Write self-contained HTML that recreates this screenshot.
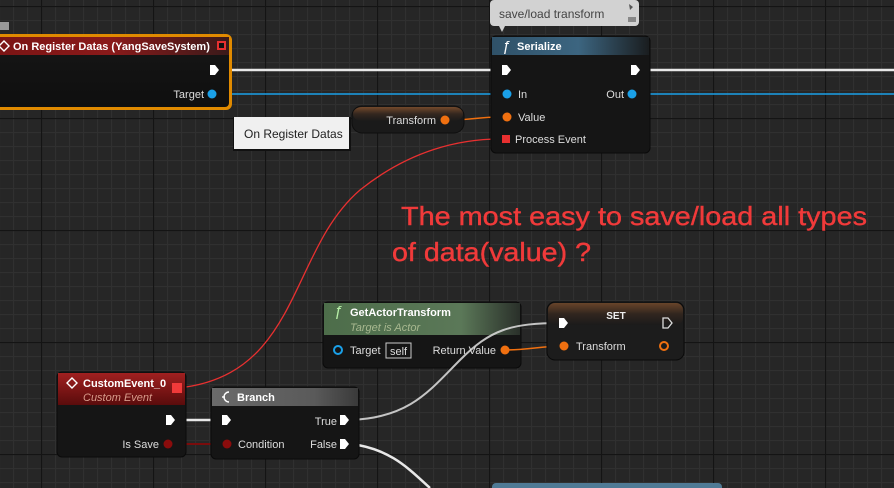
<!DOCTYPE html>
<html><head><meta charset="utf-8"><style>
html,body{margin:0;padding:0;background:#262626;overflow:hidden}
svg{display:block}
text{font-family:"Liberation Sans",sans-serif}
</style></head><body>
<svg width="894" height="488" viewBox="0 0 894 488" xmlns="http://www.w3.org/2000/svg">
<defs>
<pattern id="minor" x="-1" y="6" width="14" height="14" patternUnits="userSpaceOnUse">
<path d="M0 0.5H14M0.5 0V14" stroke="#303030" stroke-width="1.2" fill="none"/>
</pattern>
<pattern id="major" x="41" y="6" width="112" height="112" patternUnits="userSpaceOnUse">
<path d="M0 0.5H112M0.5 0V112" stroke="#141414" stroke-width="1.3" fill="none"/>
</pattern>
<linearGradient id="redH" x1="0" x2="1"><stop offset="0" stop-color="#7a1414"/><stop offset="0.5" stop-color="#8a1a1a"/><stop offset="1" stop-color="#3a1a1a"/></linearGradient>
<linearGradient id="redV" x1="0" y1="0" x2="0" y2="1"><stop offset="0" stop-color="#a02020"/><stop offset="1" stop-color="#5a0c0c"/></linearGradient>
<linearGradient id="blueH" x1="0" x2="1"><stop offset="0" stop-color="#2f5168"/><stop offset="0.55" stop-color="#3c6580"/><stop offset="1" stop-color="#1a1d1f"/></linearGradient>
<linearGradient id="greenH" x1="0" x2="1"><stop offset="0" stop-color="#4d6d4a"/><stop offset="0.7" stop-color="#5b7858"/><stop offset="1" stop-color="#2a302a"/></linearGradient>
<linearGradient id="grayH" x1="0" x2="1"><stop offset="0" stop-color="#6a6a6a"/><stop offset="0.7" stop-color="#5a5a5a"/><stop offset="1" stop-color="#3a3a3a"/></linearGradient>
<linearGradient id="orV" x1="0" y1="0" x2="0" y2="1"><stop offset="0" stop-color="#8a5530"/><stop offset="0.5" stop-color="#3a2a20"/><stop offset="1" stop-color="#1a1a1a"/></linearGradient>
<linearGradient id="body" x1="0" y1="0" x2="0" y2="1"><stop offset="0" stop-color="#161616"/><stop offset="1" stop-color="#0f0f0f"/></linearGradient>
</defs>
<rect width="894" height="488" fill="#262626"/>
<rect width="894" height="488" fill="url(#minor)"/>
<rect width="894" height="488" fill="url(#major)"/>

<!-- wires -->
<path d="M231 70H495M650 70H894" stroke="#e8e8e8" stroke-width="2.5" fill="none"/>
<path d="M231 94H495M650 94H894" stroke="#1aa0e8" stroke-width="1.6" fill="none"/>
<path d="M450 120 C470 120 480 117 500 117" stroke="#f07010" stroke-width="1.6" fill="none"/>
<path d="M186 387 C300 370 290 250 360 190 C410 150 460 139 500 139" stroke="#e83030" stroke-width="1.3" fill="none"/>
<path d="M186 420H214" stroke="#e8e8e8" stroke-width="2.5"/>
<path d="M172 444H226" stroke="#7a0c0c" stroke-width="2"/>
<path d="M350 444 C390 448 410 470 430 488" stroke="#e8e8e8" stroke-width="2.5" fill="none"/>

<!-- OnRegister node -->
<rect x="-10" y="34" width="242" height="76" rx="6" fill="#e08a00"/>
<rect x="-8" y="37" width="237" height="70" rx="4" fill="url(#body)"/>
<rect x="-8" y="37" width="237" height="18" fill="url(#redH)"/>
<path d="M4 41l5 5-5 5-5-5z" fill="none" stroke="#fff" stroke-width="1.4"/>
<text x="13" y="50" fill="#fff" font-size="11" font-weight="bold">On Register Datas (YangSaveSystem)</text>
<rect x="217" y="41" width="9" height="9" fill="#e83030"/><rect x="219" y="43" width="5" height="5" fill="#111"/>
<path d="M210 65h5l4 5-4 5h-5z" fill="#fff"/>
<text x="204" y="98" fill="#ddd" font-size="11" text-anchor="end">Target</text>
<circle cx="212" cy="94" r="4.5" fill="#1aa0e8"/>
<rect x="0" y="22" width="9" height="8" fill="#9a9a9a"/>

<!-- tooltip -->
<rect x="233" y="117" width="118" height="34" fill="#111"/>
<rect x="234" y="117" width="115" height="32" fill="#f0f0f0"/>
<text x="244" y="138" fill="#222" font-size="12">On Register Datas</text>

<!-- Transform var -->
<rect x="352" y="106" width="112" height="27" rx="10" fill="#1a1a1a" stroke="#0e0e0e"/>
<rect x="353" y="107" width="110" height="14" rx="9" fill="url(#orV)" opacity="0.8"/>
<text x="436" y="124" fill="#ddd" font-size="11" text-anchor="end">Transform</text>
<circle cx="445" cy="120" r="4.5" fill="#f07010"/>

<!-- comment bubble -->
<rect x="490" y="0" width="149" height="26" rx="4" fill="#d2d2d2"/>
<path d="M499 26h6l-3 6z" fill="#d2d2d2"/>
<text x="499" y="18" fill="#444" font-size="12">save/load transform</text>
<path d="M629 4l4 3-3 3z" fill="#555"/><rect x="628" y="17" width="8" height="5" fill="#888"/>

<!-- Serialize node -->
<rect x="491" y="36" width="159" height="117" rx="5" fill="#151515" stroke="#0a0a0a"/>
<rect x="492" y="37" width="157" height="18" fill="url(#blueH)"/>
<text x="502" y="51" fill="#fff" font-size="15" font-style="italic" font-family="Liberation Serif,serif">ƒ</text>
<text x="517" y="50" fill="#fff" font-size="11" font-weight="bold">Serialize</text>
<path d="M502 65h5l4 5-4 5h-5z" fill="#fff"/>
<path d="M631 65h5l4 5-4 5h-5z" fill="#fff"/>
<circle cx="507" cy="94" r="4.5" fill="#1aa0e8"/>
<text x="518" y="98" fill="#ddd" font-size="11">In</text>
<text x="624" y="98" fill="#ddd" font-size="11" text-anchor="end">Out</text>
<circle cx="632" cy="94" r="4.5" fill="#1aa0e8"/>
<circle cx="507" cy="117" r="4.5" fill="#f07010"/>
<text x="518" y="121" fill="#ddd" font-size="11">Value</text>
<rect x="502" y="135" width="8" height="8" fill="#e83030"/>
<text x="515" y="143" fill="#ddd" font-size="11">Process Event</text>

<!-- red annotation -->
<text x="401" y="225" fill="#f03a3a" stroke="#f03a3a" stroke-width="0.4" font-size="26" textLength="466" lengthAdjust="spacingAndGlyphs">The most easy to save/load all types</text>
<text x="392" y="261" fill="#f03a3a" stroke="#f03a3a" stroke-width="0.4" font-size="26" textLength="199" lengthAdjust="spacingAndGlyphs">of data(value) ?</text>

<!-- GetActorTransform -->
<rect x="323" y="302" width="198" height="66" rx="5" fill="#151515" stroke="#0a0a0a"/>
<rect x="324" y="303" width="196" height="32" fill="url(#greenH)"/>
<text x="334" y="316" fill="#b8f0a8" font-size="15" font-style="italic" font-family="Liberation Serif,serif">ƒ</text>
<text x="350" y="316" fill="#fff" font-size="11" font-weight="bold">GetActorTransform</text>
<text x="350" y="331" fill="#a8b890" font-size="11" font-style="italic">Target is Actor</text>
<circle cx="338" cy="350" r="4" fill="none" stroke="#1aa0e8" stroke-width="2"/>
<text x="350" y="354" fill="#ddd" font-size="11">Target</text>
<rect x="386" y="343" width="25" height="15" fill="none" stroke="#ccc"/>
<text x="390" y="355" fill="#ddd" font-size="11">self</text>
<text x="496" y="354" fill="#ddd" font-size="11" text-anchor="end">Return Value</text>
<circle cx="505" cy="350" r="4.5" fill="#f07010"/>

<!-- wire over GetActor node -->
<path d="M350 420 C410 418 430 390 460 360 C490 330 510 323 562 323" stroke="#e0e0e0" stroke-width="2" fill="none" opacity="0.85"/>
<path d="M505 350 C530 350 540 346 565 346" stroke="#f07010" stroke-width="1.6" fill="none"/>

<!-- SET -->
<rect x="547" y="302" width="137" height="58" rx="8" fill="#1c1c1c" stroke="#0a0a0a"/>
<rect x="548" y="303" width="135" height="22" rx="7" fill="url(#orV)" opacity="0.7"/>
<text x="616" y="319" fill="#eee" font-size="10" font-weight="bold" text-anchor="middle">SET</text>
<path d="M559 318h5l4 5-4 5h-5z" fill="#fff"/>
<path d="M663 318h5l4 5-4 5h-5z" fill="none" stroke="#ddd" stroke-width="1.3"/>
<circle cx="564" cy="346" r="4.5" fill="#f07010"/>
<text x="576" y="350" fill="#ddd" font-size="11">Transform</text>
<circle cx="664" cy="346" r="4" fill="none" stroke="#f07010" stroke-width="2"/>

<!-- CustomEvent -->
<rect x="57" y="372" width="129" height="85" rx="5" fill="#151515" stroke="#0a0a0a"/>
<rect x="58" y="373" width="127" height="32" fill="url(#redV)"/>
<path d="M72 378l5 5-5 5-5-5z" fill="none" stroke="#fff" stroke-width="1.4"/>
<text x="83" y="387" fill="#fff" font-size="11" font-weight="bold">CustomEvent_0</text>
<text x="83" y="401" fill="#d89a8a" font-size="11" font-style="italic">Custom Event</text>
<rect x="172" y="383" width="10" height="10" fill="#f03a3a"/>
<path d="M166 415h5l4 5-4 5h-5z" fill="#fff"/>
<text x="159" y="448" fill="#ddd" font-size="11" text-anchor="end">Is Save</text>
<circle cx="168" cy="444" r="4.5" fill="#8a0c0c"/>

<!-- Branch -->
<rect x="211" y="387" width="148" height="72" rx="5" fill="#151515" stroke="#0a0a0a"/>
<rect x="212" y="388" width="146" height="18" fill="url(#grayH)"/>
<path d="M229 392a5 5 0 0 0 0 10" fill="none" stroke="#fff" stroke-width="1.4"/>
<path d="M225 397h-3" stroke="#fff" stroke-width="1.4"/>
<text x="237" y="401" fill="#fff" font-size="11" font-weight="bold">Branch</text>
<path d="M222 415h5l4 5-4 5h-5z" fill="#fff"/>
<circle cx="227" cy="444" r="4.5" fill="#8a0c0c"/>
<text x="238" y="448" fill="#ddd" font-size="11">Condition</text>
<text x="337" y="425" fill="#ddd" font-size="11" text-anchor="end">True</text>
<path d="M340 415h5l4 5-4 5h-5z" fill="#fff"/>
<text x="337" y="448" fill="#ddd" font-size="11" text-anchor="end">False</text>
<path d="M340 439h5l4 5-4 5h-5z" fill="#fff"/>

<!-- bottom node -->
<rect x="492" y="483" width="230" height="10" rx="4" fill="#4f7a95"/>
</svg>
</body></html>
